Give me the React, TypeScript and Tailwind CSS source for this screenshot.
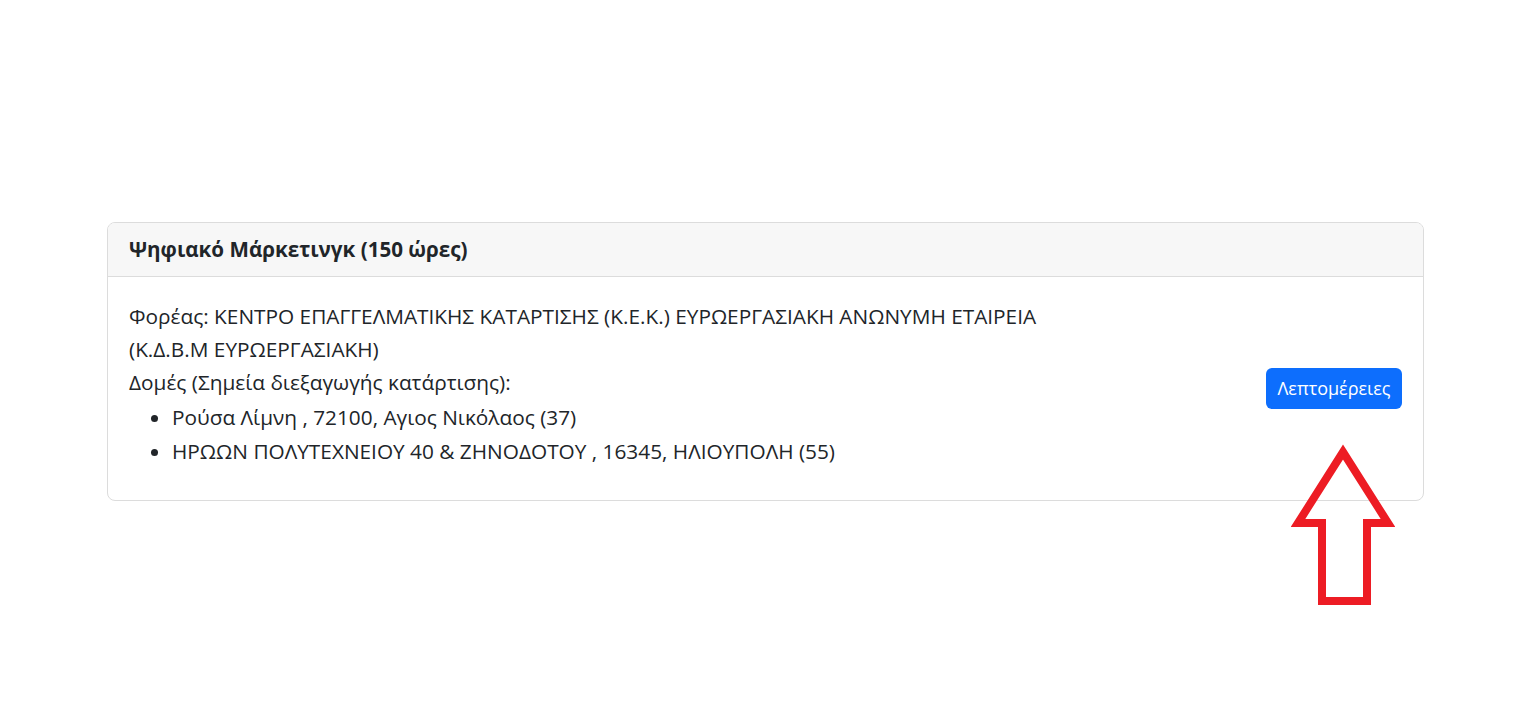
export default function App() {
  return (
    <div
      className="relative min-h-[723px] bg-white text-[#212529]"
      style={{ fontFamily: '"Open Sans", "Noto Sans", sans-serif' }}
    >
      <div className="pl-[107px] pr-[112px] pt-[222px]">
        <div className="overflow-hidden rounded-[8px] border border-[#dcdcdc]">
          <div className="border-b border-[#dcdcdc] bg-[#f7f7f7] px-[21px] py-[10px] text-[20.6px] font-bold leading-[33px]">
            Ψηφιακό Μάρκετινγκ (150 ώρες)
          </div>
          <div className="flex items-center justify-between px-[21px] py-[23px] text-[20.8px] leading-[33px]">
            <div>
              <div>
                Φορέας: ΚΕΝΤΡΟ ΕΠΑΓΓΕΛΜΑΤΙΚΗΣ ΚΑΤΑΡΤΙΣΗΣ (Κ.Ε.Κ.) ΕΥΡΩΕΡΓΑΣΙΑΚΗ ΑΝΩΝΥΜΗ ΕΤΑΙΡΕΙΑ
                <br />
                (Κ.Δ.Β.Μ ΕΥΡΩΕΡΓΑΣΙΑΚΗ)
              </div>
              <div>Δομές (Σημεία διεξαγωγής κατάρτισης):</div>
              <ul className="mb-[9px] mt-[1px] list-disc pl-[43px] leading-[34px]">
                <li>Ρούσα Λίμνη , 72100, Αγιος Νικόλαος (37)</li>
                <li>ΗΡΩΩΝ ΠΟΛΥΤΕΧΝΕΙΟΥ 40 &amp; ΖΗΝΟΔΟΤΟΥ , 16345, ΗΛΙΟΥΠΟΛΗ (55)</li>
              </ul>
            </div>
            <button className="h-[41px] w-[136px] rounded-[6px] bg-[#0d6efd] text-[18px] text-white">
              Λεπτομέρειες
            </button>
          </div>
        </div>
      </div>

      {/* annotation arrow */}
      <svg
        className="absolute left-[1291px] top-[444px]"
        width="104"
        height="164"
        viewBox="0 0 104 164"
      >
        <polygon
          points="52,8 97,79 76,79 76,157 31,157 31,79 7,79"
          fill="none"
          stroke="#ed1c24"
          strokeWidth="8"
        />
      </svg>
    </div>
  );
}
